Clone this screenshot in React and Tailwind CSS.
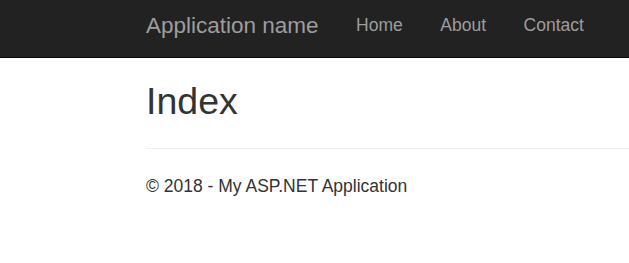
export default function App() {
  const font = { fontFamily: '"Liberation Sans", Arial, sans-serif' };
  return (
    <div className="min-h-[263px] bg-white text-[#333]" style={font}>
      <nav className="h-[58px] bg-[#222] border-b border-[#080808]">
        <div className="flex items-start pl-[146px] pt-[13px]">
          <a className="text-[22.5px] leading-[25px] text-[#9d9d9d] pr-[18.75px]">Application name</a>
          <ul className="flex">
            <li className="px-[18.75px] text-[17.5px] leading-[25px] text-[#9d9d9d]">Home</li>
            <li className="px-[18.75px] text-[17.5px] leading-[25px] text-[#9d9d9d]">About</li>
            <li className="px-[18.75px] text-[17.5px] leading-[25px] text-[#9d9d9d]">Contact</li>
          </ul>
        </div>
      </nav>
      <div className="pl-[146px]">
        <h2 className="mt-[23px] text-[37.5px] leading-[41.25px] font-normal">Index</h2>
        <hr className="mt-[26px] border-0 border-t border-[#eee]" />
        <footer>
          <p className="mt-[25px] text-[17.5px] leading-[25px]">© 2018 - My ASP.NET Application</p>
        </footer>
      </div>
    </div>
  );
}
